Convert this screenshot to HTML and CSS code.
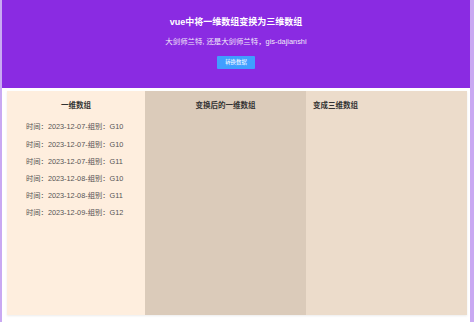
FILE: index.html
```html
<!DOCTYPE html>
<html lang="zh-CN">
<head>
  <meta charset="UTF-8">
  <meta name="viewport" content="width=device-width, initial-scale=1.0">
  <title>vue中将一维数组变换为三维数组</title>
  <link rel="stylesheet" href="styles.css">
</head>
<body>
  <div class="page">
    <div class="header">
      <h1 class="title">vue中将一维数组变换为三维数组</h1>
      <p class="sub">大剑师兰特, 还是大剑师兰特，gis-dajianshi</p>
      <button class="btn">转换数据</button>
    </div>
    <div class="cols">
      <div class="col col1">
        <h3>一维数组</h3>
        <ul class="list">
          <li>时间：2023-12-07-组别：G10</li>
          <li>时间：2023-12-07-组别：G10</li>
          <li>时间：2023-12-07-组别：G11</li>
          <li>时间：2023-12-08-组别：G10</li>
          <li>时间：2023-12-08-组别：G11</li>
          <li>时间：2023-12-09-组别：G12</li>
        </ul>
      </div>
      <div class="col col2">
        <h3>变换后的一维数组</h3>
      </div>
      <div class="col col3">
        <h3>变成三维数组</h3>
      </div>
    </div>
  </div>
</body>
</html>
```

FILE: styles.css
```css
html, body {
  margin: 0;
  padding: 0;
  height: 100%;
}
body {
  background: #c9a9f2;
  font-family: "Liberation Sans", "Noto Sans CJK SC", sans-serif;
}
.page {
  margin: 0 4px 0 2px;
  height: 322px;
  background: #fff;
  overflow: hidden;
}
.header {
  height: 88px;
  background: #8a2be2;
  text-align: center;
  padding-top: 16px;
  box-sizing: border-box;
}
.title {
  margin: 0;
  font-size: 9px;
  line-height: 12px;
  font-weight: bold;
  color: #fff;
}
.sub {
  margin: 9px 0 0;
  font-size: 7.4px;
  line-height: 10px;
  color: #f2eaf8;
}
.btn {
  display: block;
  margin: 9px auto 0;
  width: 38px;
  height: 13px;
  padding: 0;
  border: none;
  border-radius: 1px;
  background: #409eff;
  color: #fff;
  font-family: inherit;
  font-size: 5.4px;
  line-height: 13px;
}
.cols {
  display: flex;
  margin: 3px 3px 0 5px;
  height: 224px;
  box-shadow: 0 1px 2px rgba(0, 0, 0, .08);
}
.col {
  padding-top: 10px;
  box-sizing: border-box;
}
.col h3 {
  margin: 0;
  font-size: 7.5px;
  line-height: 10px;
  font-weight: bold;
  color: #333;
  text-align: center;
}
.col1 {
  width: 30%;
  background: #feeede;
}
.col2 {
  width: 35%;
  background: #dbcbba;
}
.col3 {
  width: 35%;
  background: #ecdccb;
}
.col3 h3 {
  text-align: left;
  padding-left: 7px;
}
.list {
  list-style: none;
  margin: 7.4px 0 0;
  padding: 0 0 0 19px;
}
.list li {
  font-size: 7.3px;
  line-height: 17.2px;
  color: #555;
}
```
